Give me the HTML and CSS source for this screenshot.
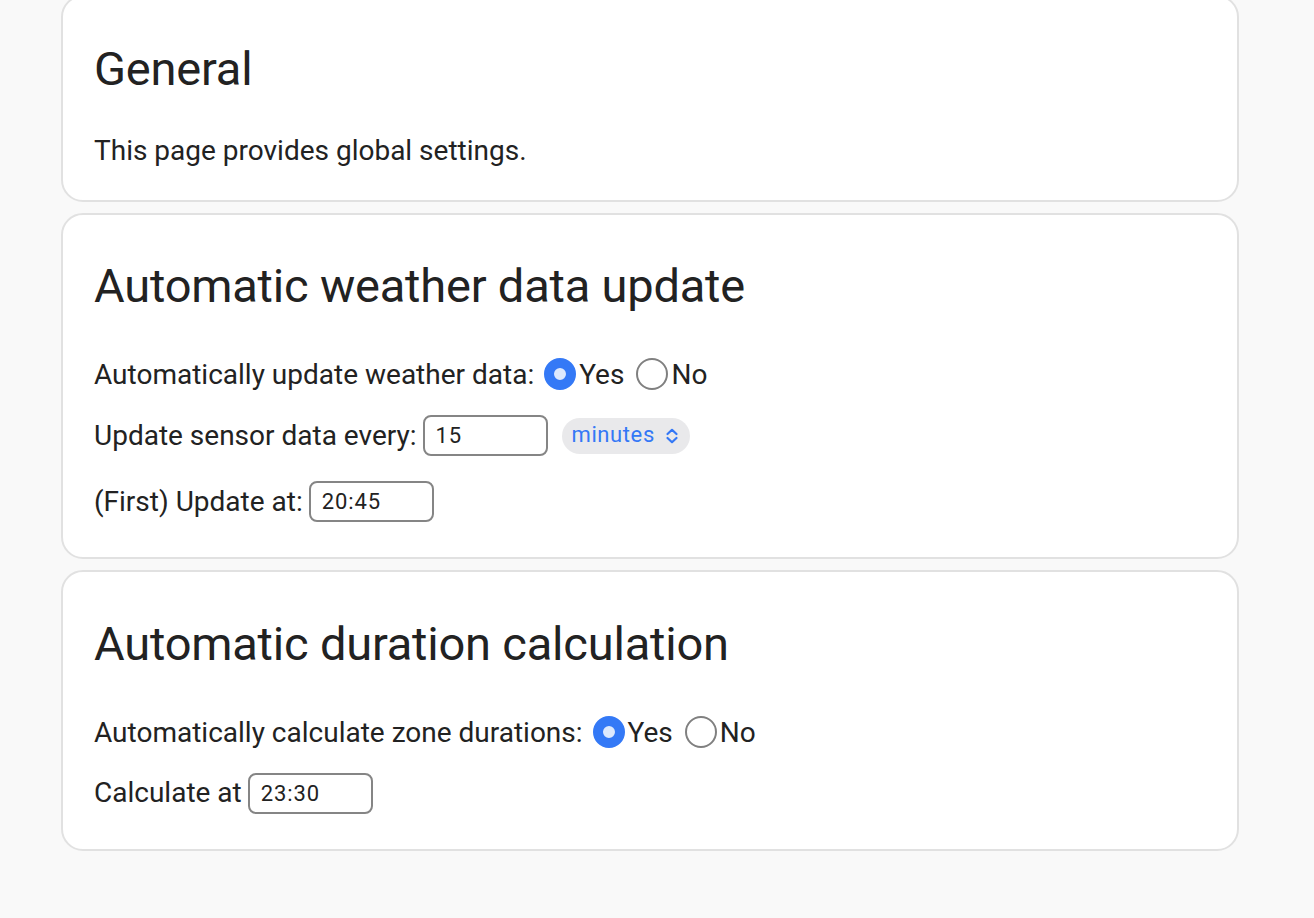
FILE: index.html
```html
<!DOCTYPE html>
<html lang="en">
<head>
<meta charset="utf-8">
<title>Settings</title>
<link rel="stylesheet" href="styles.css">
</head>
<body>
<div class="page">
  <section class="card">
    <h2>General</h2>
    <p class="intro">This page provides global settings.</p>
  </section>

  <section class="card">
    <h2>Automatic weather data update</h2>
    <div class="row">
      <span>Automatically update weather data:</span>
      <label class="opt"><input type="radio" name="wu" checked><span>Yes</span></label>
      <label class="opt"><input type="radio" name="wu"><span>No</span></label>
    </div>
    <div class="row row-gap1">
      <span>Update sensor data every:</span>
      <input class="field" type="text" value="15">
      <span class="select">minutes
        <svg class="chev" viewBox="0 0 14 16" width="14" height="16"><path d="M2.5 6 L7 1.8 L11.5 6 M2.5 10 L7 14.2 L11.5 10" fill="none" stroke="currentColor" stroke-width="2.2" stroke-linecap="round" stroke-linejoin="round"/></svg>
      </span>
    </div>
    <div class="row row-gap2">
      <span>(First) Update at:</span>
      <input class="field" type="text" value="20:45">
    </div>
  </section>

  <section class="card">
    <h2>Automatic duration calculation</h2>
    <div class="row">
      <span>Automatically calculate zone durations:</span>
      <label class="opt"><input type="radio" name="dc" checked><span>Yes</span></label>
      <label class="opt"><input type="radio" name="dc"><span>No</span></label>
    </div>
    <div class="row row-gap1">
      <span>Calculate at</span>
      <input class="field" type="text" value="23:30">
    </div>
  </section>
</div>
</body>
</html>
```

FILE: styles.css
```css
html, body {
  margin: 0;
  padding: 0;
  background: #f9f9f9;
}

body {
  font-family: Roboto, "Liberation Sans", Arial, sans-serif;
  color: #222222;
  font-size: 28px;
  line-height: 1.2;
}

.page {
  width: 1178px;
  margin: -5px 0 0 61px;
  display: flex;
  flex-direction: column;
  gap: 11px;
}

.card {
  background: #ffffff;
  border: 2px solid #e1e1e1;
  border-radius: 22px;
  padding: 0 31px 35px;
}

.card h2 {
  font-size: 47px;
  font-weight: 400;
  line-height: 55px;
  margin: 43.5px 0 45.1px;
  letter-spacing: -0.2px;
}

.card .intro {
  margin: -6.6px 0 -3px 0;
}

.row {
  display: flex;
  align-items: center;
  white-space: nowrap;
}

.row-gap1 { margin-top: 23px; }
.row-gap2 { margin-top: 25px; }

.opt {
  display: flex;
  align-items: center;
}

.opt:first-of-type { margin-left: 10px; }
.opt + .opt { margin-left: 12px; }

.opt span { margin-left: 3px; }

.opt input {
  appearance: none;
  -webkit-appearance: none;
  width: 32px;
  height: 32px;
  margin: 0 0 2px 0;
  border-radius: 50%;
  border: 2.6px solid #808080;
  background: #ffffff;
  box-sizing: border-box;
}

.opt input:checked {
  border: 10px solid #3479f6;
  background: #dde9fd;
}

.field {
  font-family: Roboto, "Liberation Sans", Arial, sans-serif;
  font-size: 22px;
  letter-spacing: 0.9px;
  color: #222222;
  width: 125px;
  height: 41px;
  box-sizing: border-box;
  border: 2px solid #858585;
  border-radius: 8px;
  padding: 0 10px 0 11px;
  margin-left: 6px;
  background: #ffffff;
  outline: none;
}

.select {
  display: inline-flex;
  align-items: center;
  height: 36px;
  box-sizing: border-box;
  padding: 0 11px 0 10px;
  margin-left: 14px;
  background: #e9e9eb;
  border-radius: 18px;
  color: #3478f6;
  font-size: 22px;
  letter-spacing: 0.6px;
  gap: 10px;
}

.chev {
  display: block;
}
```
